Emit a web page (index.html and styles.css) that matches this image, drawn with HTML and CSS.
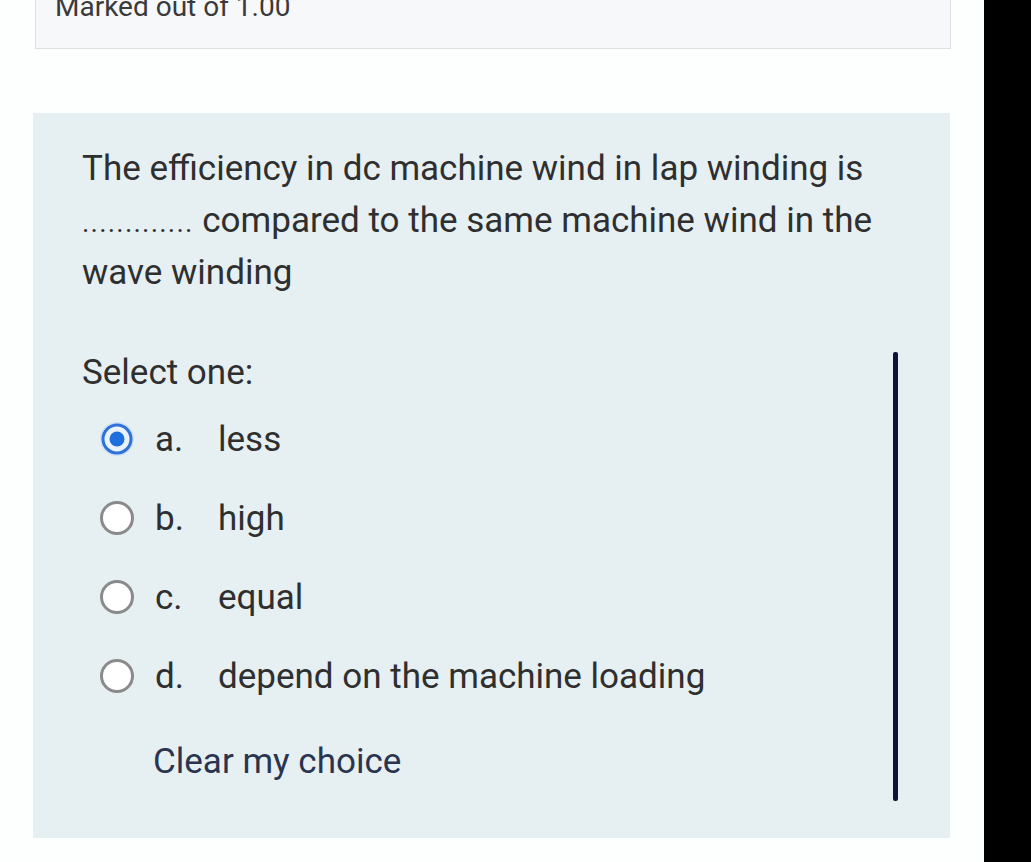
FILE: index.html
```html
<!DOCTYPE html>
<html>
<head>
<meta charset="utf-8">
<link rel="stylesheet" href="styles.css">
</head>
<body>
<div class="screen">
  <main class="page">
    <div class="info">
      <div class="marked">Marked out of 1.00</div>
    </div>
    <section class="question">
      <div class="flagbar"></div>
      <p class="qtext">The efficiency in dc machine wind in lap winding is <span class="dots">.............</span> compared to the same machine wind in the wave winding</p>
      <div class="prompt">Select one:</div>
      <div class="answers">
        <div class="answer">
          <svg class="radio" viewBox="0 0 36 36" width="36" height="36"><circle cx="18" cy="18" r="17" fill="#cfe0f7"/><circle cx="18" cy="18" r="14" fill="#eaf2fc" stroke="#2f72d8" stroke-width="3"/><circle cx="18" cy="18" r="7.5" fill="#1f6fdc"/></svg>
          <span class="letter">a.</span><span class="label">less</span>
        </div>
        <div class="answer">
          <svg class="radio" viewBox="0 0 36 36" width="36" height="36"><circle cx="18" cy="18" r="15.5" fill="#ffffff" stroke="#8a8a8a" stroke-width="3"/></svg>
          <span class="letter">b.</span><span class="label">high</span>
        </div>
        <div class="answer">
          <svg class="radio" viewBox="0 0 36 36" width="36" height="36"><circle cx="18" cy="18" r="15.5" fill="#ffffff" stroke="#8a8a8a" stroke-width="3"/></svg>
          <span class="letter">c.</span><span class="label">equal</span>
        </div>
        <div class="answer">
          <svg class="radio" viewBox="0 0 36 36" width="36" height="36"><circle cx="18" cy="18" r="15.5" fill="#ffffff" stroke="#8a8a8a" stroke-width="3"/></svg>
          <span class="letter">d.</span><span class="label">depend on the machine loading</span>
        </div>
      </div>
      <div class="clear">Clear my choice</div>
    </section>
  </main>
  <div class="edge"></div>
</div>
</body>
</html>
```
FILE: styles.css
```css
html, body {
  margin: 0;
  padding: 0;
  background: #ffffff;
}
body {
  font-family: Roboto, "Liberation Sans", Arial, sans-serif;
  color: #2f2f2f;
}
.screen {
  display: flex;
  width: 1031px;
  height: 862px;
  overflow: hidden;
}
.page {
  flex: 1;
  background: #fdfefe;
}
.edge {
  width: 47px;
  background: #000000;
}
.info {
  margin-left: 35px;
  width: 914px;
  height: 48px;
  background: #f7f8fa;
  border: 1px solid #dcdfe2;
  border-top: none;
  overflow: hidden;
}
.marked {
  font-size: 28px;
  line-height: 28px;
  color: #3a3a3a;
  margin-top: -7px;
  margin-left: 19px;
}
.question {
  position: relative;
  margin-top: 64px;
  margin-left: 33px;
  width: 917px;
  height: 725px;
  box-sizing: border-box;
  background: #e6f0f3;
  padding: 30px 40px 0 49px;
}
.flagbar {
  position: absolute;
  left: 860px;
  top: 239px;
  width: 5px;
  height: 449px;
  background: #10123d;
  border-radius: 2px;
}
.qtext {
  margin: 0;
  font-size: 35px;
  line-height: 52px;
  width: 810px;
  color: #2f2f2f;
}
.dots {
  font-size: 28px;
  line-height: 1;
  letter-spacing: 1.2px;
}
.prompt {
  margin-top: 48px;
  font-size: 35px;
  line-height: 52px;
  color: #2f2f2f;
}
.answers {
  margin-top: 14px;
  display: flex;
  flex-direction: column;
  gap: 27px;
}
.answer {
  display: flex;
  align-items: center;
  height: 52px;
  font-size: 35px;
}
.radio {
  margin-left: 17px;
  flex: none;
}
.letter {
  margin-left: 20px;
  width: 63px;
  color: #2f2f2f;
}
.label {
  color: #2f2f2f;
}
.clear {
  margin-top: 34px;
  margin-left: 71px;
  font-size: 35px;
  line-height: 52px;
  color: #2b344f;
}
```
